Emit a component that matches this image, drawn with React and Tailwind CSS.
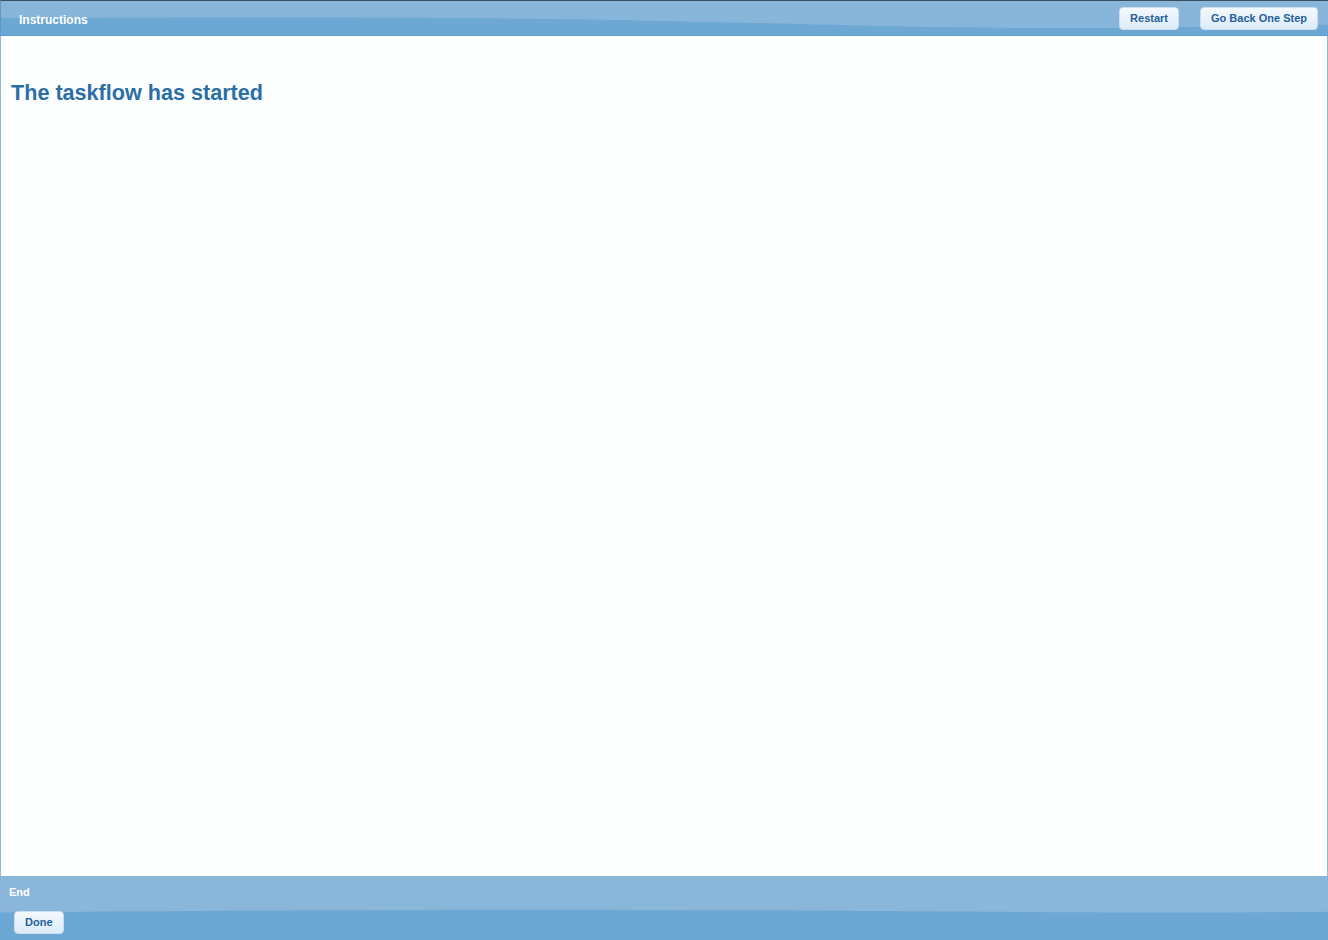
const font = { fontFamily: '"Liberation Sans", Arial, sans-serif' }

function Wave({ y1, y2 }) {
  return (
    <svg className="absolute inset-0 w-full h-full pointer-events-none" viewBox="0 0 1328 100" preserveAspectRatio="none">
      <path d={`M0 ${y1} C 300 ${y1 - 4}, 500 ${y1 - 6}, 800 ${y2 - 4} S 1200 ${y2}, 1328 ${y2 - 2} L1328 100 L0 100 Z`} fill="#6da7d3" />
    </svg>
  )
}

function Btn({ children }) {
  return (
    <button className="relative h-[23px] px-[10px] rounded-[4px] border border-[#c9ddef] bg-gradient-to-b from-[#f4f9fe] to-[#dcebf8] text-[11px] font-bold text-[#24609a] leading-none">
      {children}
    </button>
  )
}

export default function App() {
  return (
    <div className="w-[1328px] h-[940px] flex flex-col bg-[#fdfefe]" style={font}>
      <div className="relative h-[36px] shrink-0 bg-[#88b6db] border-t border-t-[#3e4c5a] border-l border-l-[#5f98c8] border-b border-b-[#5c9dd1] flex items-center justify-between pl-[18px] pr-[10px] overflow-hidden">
        <Wave y1={50} y2={72} />
        <span className="relative text-[12px] font-bold text-white pt-[3px]">Instructions</span>
        <div className="relative flex items-center gap-[21px] pt-[1px]">
          <Btn>Restart</Btn>
          <Btn>Go Back One Step</Btn>
        </div>
      </div>
      <div className="flex-1 border-l border-r border-[#8fbbdf] px-[10px] pt-[46px]">
        <h1 className="text-[21.6px] font-bold text-[#2a6ea6] leading-none">The taskflow has started</h1>
      </div>
      <div className="relative h-[64px] shrink-0 bg-[#8ab6da] overflow-hidden">
        <Wave y1={57} y2={58} />
        <div className="relative pl-[9px] pt-[11px] text-[11px] font-bold text-white leading-none">End</div>
        <div className="relative pl-[14px] pt-[11px]">
          <Btn>Done</Btn>
        </div>
      </div>
    </div>
  )
}
